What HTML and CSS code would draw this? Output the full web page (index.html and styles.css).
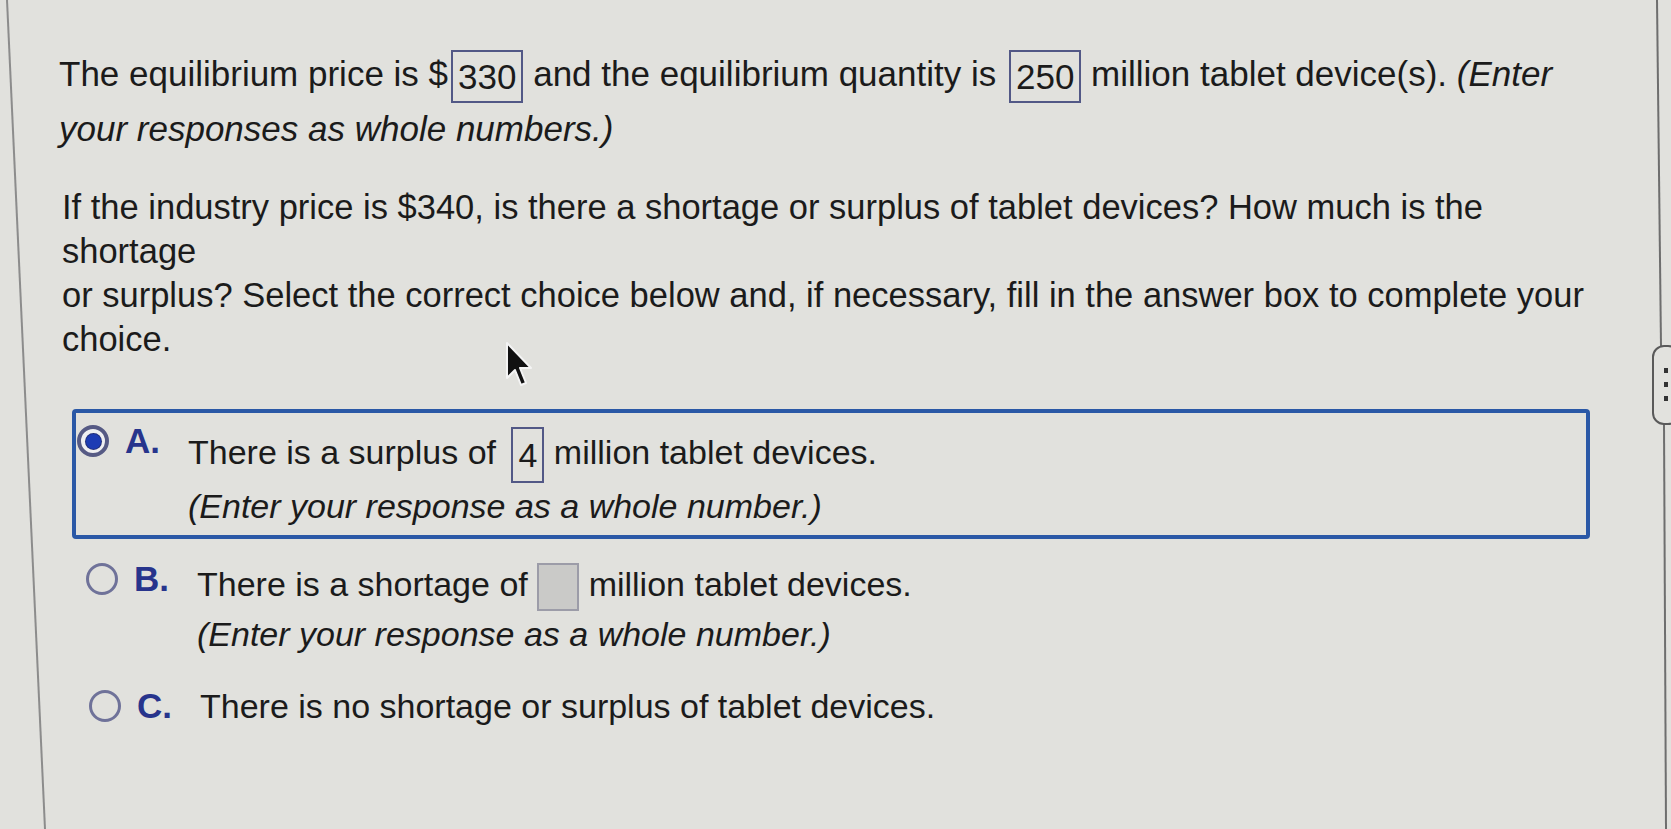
FILE: index.html
```html
<!DOCTYPE html>
<html lang="en">
<head>
<meta charset="utf-8">
<title>Equilibrium question</title>
<link rel="stylesheet" href="styles.css">
</head>
<body>
<div class="page">
  <p class="q1">The equilibrium price is $<span class="ans">330</span> and the equilibrium quantity is <span class="ans">250</span> million tablet device(s). <em>(Enter<br>your responses as whole numbers.)</em></p>
  <p class="q2">If the industry price is $340, is there a shortage or surplus of tablet devices? How much is the<br>shortage<br>or surplus? Select the correct choice below and, if necessary, fill in the answer box to complete your<br>choice.</p>
  <div class="options">
    <div class="opt opt-a selected">
      <div class="row"><span class="lead"><span class="radio on"><span class="dot"></span></span><span class="letter">A.</span></span><span class="txt">There is a surplus of <span class="ans ans-4">4</span> million tablet devices.</span></div>
      <div class="note">(Enter your response as a whole number.)</div>
    </div>
    <div class="opt opt-b">
      <div class="row"><span class="lead"><span class="radio"></span><span class="letter">B.</span></span><span class="txt">There is a shortage of <span class="blank"></span> million tablet devices.</span></div>
      <div class="note">(Enter your response as a whole number.)</div>
    </div>
    <div class="opt opt-c">
      <div class="row"><span class="lead"><span class="radio"></span><span class="letter">C.</span></span><span class="txt">There is no shortage or surplus of tablet devices.</span></div>
    </div>
  </div>
</div>
<svg class="overlay" width="1671" height="829" viewBox="0 0 1671 829" aria-hidden="true">
  <line x1="7" y1="0" x2="45" y2="829" stroke="#8c8c8c" stroke-width="2"/>
  <line x1="1657" y1="0" x2="1661" y2="346" stroke="#6e6e6e" stroke-width="2"/>
  <line x1="1664" y1="424" x2="1666" y2="829" stroke="#6e6e6e" stroke-width="2"/>
  <rect x="1653" y="346" width="26" height="78" rx="11" fill="#e2e2de" stroke="#5a5a5a" stroke-width="2"/>
  <rect x="1664" y="368" width="4" height="5" fill="#333"/>
  <rect x="1664" y="382" width="4" height="5" fill="#333"/>
  <rect x="1664" y="396" width="4" height="5" fill="#333"/>
  <path d="M507 343 L507 378 L515 370 L521 385 L526 383 L520 368 L531 368 Z" fill="#111" stroke="#f4f4f4" stroke-width="2" stroke-linejoin="round"/>
</svg>
</body>
</html>
```

FILE: styles.css
```css
html, body {
  margin: 0;
  padding: 0;
  overflow: hidden;
}
body {
  width: 1671px;
  height: 829px;
  background: #e1e1dd;
  color: #1b1b1b;
  font-family: "Liberation Sans", Arial, Helvetica, sans-serif;
  font-size: 35px;
  position: relative;
}
.page {
  padding: 48px 0 0 59px;
}
p {
  margin: 0;
  white-space: nowrap;
}
.q1 {
  line-height: 51px;
}
.q2 {
  margin-top: 31px;
  line-height: 44px;
  padding-left: 3px;
  font-size: 34.5px;
}
em {
  font-style: italic;
}
.ans {
  display: inline-block;
  box-sizing: border-box;
  height: 53px;
  line-height: 49px;
  padding: 0 5px;
  border: 2px solid #525886;
  vertical-align: middle;
  margin-left: 3px;
}
.ans-4 {
  height: 56px;
  line-height: 52px;
  padding: 0 5px;
  margin-left: 6px;
}
.blank {
  display: inline-block;
  box-sizing: border-box;
  width: 42px;
  height: 48px;
  background: #cacac8;
  border: 2px solid #9c9ca8;
  vertical-align: middle;
}
.options {
  margin-top: 48px;
  margin-left: 13px;
  width: 1518px;
  display: flex;
  flex-direction: column;
  font-size: 34px;
}
.opt {
  box-sizing: border-box;
  border: 4px solid transparent;
  border-radius: 4px;
  padding: 14px 0 5px 1px;
}
.selected {
  border-color: #2a58a6;
  padding-bottom: 8px;
}
.opt-b {
  margin-top: 3px;
  margin-left: 9px;
}
.opt-c {
  margin-left: 12px;
}
.row {
  display: flex;
  align-items: center;
  min-height: 48px;
  white-space: nowrap;
}
.lead {
  display: flex;
  align-items: center;
  flex: none;
  align-self: flex-start;
  height: 32px;
}
.opt-a .lead {
  margin-top: -2px;
}
.opt-b .lead {
  margin-top: 3px;
}
.opt-c .lead {
  margin-top: 8px;
}
.radio {
  box-sizing: border-box;
  width: 32px;
  height: 32px;
  border-radius: 50%;
  border: 3px solid #6f7299;
  display: flex;
  align-items: center;
  justify-content: center;
  flex: none;
}
.radio.on {
  border: 4px solid #565a84;
  background: #efeff1;
}
.dot {
  width: 15px;
  height: 15px;
  border-radius: 50%;
  background: #1d3cb4;
  box-shadow: 0 0 0 1px #23307a;
}
.letter {
  width: 63px;
  margin-left: 16px;
  font-weight: bold;
  color: #27348c;
  flex: none;
  font-size: 35px;
  line-height: 32px;
}
.txt {
  line-height: 48px;
}
.note {
  font-style: italic;
  line-height: 42px;
  margin-top: 2px;
  padding-left: 111px;
  white-space: nowrap;
}
.overlay {
  position: absolute;
  left: 0;
  top: 0;
  pointer-events: none;
}
```
